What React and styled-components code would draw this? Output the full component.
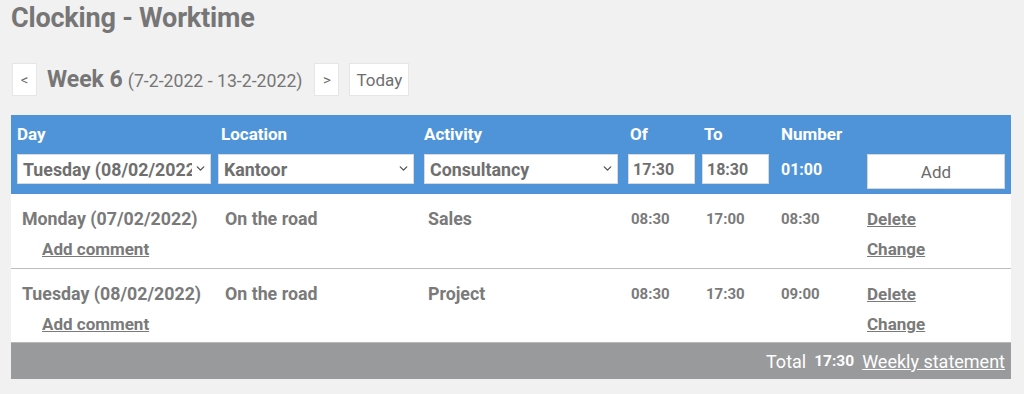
import React from "react";
import styled, { createGlobalStyle } from "styled-components";
import { ChevronDown } from "lucide-react";

const Global = createGlobalStyle`
  html, body { margin: 0; padding: 0; background: #f1f1f1; }
  body { font-family: Roboto, "Liberation Sans", sans-serif; color: #777; }
  * { box-sizing: border-box; }
`;

const Page = styled.div`
  padding: 1px 13px 0 11px;
`;

const Title = styled.h1`
  margin: 0;
  font-size: 27px;
  line-height: 34px;
  font-weight: 700;
  color: #767676;
  letter-spacing: -0.2px;
`;

const Nav = styled.div`
  display: flex;
  align-items: center;
  margin-top: 28px;
  padding-left: 1px;
  height: 33px;
`;

const NavButton = styled.button`
  height: 33px;
  padding: 0 ${(p) => (p.$wide ? 6 : 7)}px;
  min-width: 25px;
  background: #fff;
  border: 1px solid #e6e6e6;
  color: #6e6e6e;
  font-family: inherit;
  font-size: ${(p) => (p.$wide ? "17px" : "15px")};
  font-weight: 400;
  cursor: pointer;
  margin-left: ${(p) => p.$ml || 0}px;
`;

const WeekLabel = styled.div`
  margin-left: 10px;
  font-size: 23px;
  font-weight: 700;
  color: #767676;
  display: flex;
  align-items: baseline;
  gap: 5px;
`;

const Range = styled.span`
  font-size: 17.7px;
  font-weight: 400;
`;

const Table = styled.div`
  margin-top: 19px;
  width: 1000px;
`;

const cols = "204px 203px 204px 74px 79px 86px 1fr";

const Head = styled.div`
  background: #4f94d9;
  display: grid;
  grid-template-columns: ${cols};
  grid-template-rows: 35px 35px;
  row-gap: 4px;
  padding-bottom: 5px;
`;

const HeadLabel = styled.div`
  color: #fff;
  font-weight: 700;
  font-size: 17px;
  display: flex;
  align-items: center;
  padding-left: ${(p) => p.$pl ?? 6}px;
  padding-top: 2px;
`;

const HeadCell = styled.div`
  display: flex;
  align-items: flex-start;
  padding-left: ${(p) => p.$pl ?? 6}px;
  padding-right: ${(p) => p.$pr ?? 4}px;
`;

const SelectWrap = styled.div`
  position: relative;
  width: 100%;
  height: 30px;
`;

const Select = styled.select`
  appearance: none;
  -webkit-appearance: none;
  width: 100%;
  height: 30px;
  border: 1px solid #d9d9d9;
  border-radius: 0;
  background: #fff;
  color: #6f6f6f;
  font-family: inherit;
  font-weight: 700;
  font-size: 17.8px;
  padding: 0 18px 0 5px;
  outline: none;
`;

const Chevron = styled.span`
  position: absolute;
  right: 4px;
  top: 8px;
  pointer-events: none;
  color: #555;
  display: flex;
`;

const TimeInput = styled.input`
  width: 67px;
  height: 30px;
  border: 1px solid #d9d9d9;
  background: #fff;
  color: #6f6f6f;
  font-family: inherit;
  font-weight: 700;
  font-size: 16px;
  padding: 0 4px;
  outline: none;
`;

const Duration = styled.div`
  color: #fff;
  font-weight: 700;
  font-size: 16px;
  height: 30px;
  display: flex;
  align-items: center;
`;

const AddButton = styled.button`
  width: 138px;
  height: 35px;
  background: #fff;
  border: 1px solid #d6d6d6;
  color: #6a6a6a;
  font-family: inherit;
  font-size: 17px;
  font-weight: 400;
  cursor: pointer;
`;

const Row = styled.div`
  display: grid;
  grid-template-columns: ${cols};
  background: #fff;
  padding: 10px 0 ${(p) => (p.$last ? 3 : 4)}px;
  border-bottom: ${(p) => (p.$last ? "none" : "1px solid #bdbdbd")};
`;

const Cell = styled.div`
  padding-left: ${(p) => p.$pl ?? 11}px;
  font-weight: 700;
  font-size: ${(p) => (p.$small ? "15px" : "17.8px")};
  color: #7a7a7a;
  line-height: 30px;
  display: flex;
  flex-direction: column;
  align-items: flex-start;
`;

const Link = styled.a`
  color: #7a7a7a;
  text-decoration: underline;
  font-weight: 700;
  font-size: 17px;
  margin-left: ${(p) => p.$ml || 0}px;
  cursor: pointer;
`;

const Footer = styled.div`
  background: #999a9b;
  border-top: 1px solid #b9b9b9;
  height: 37px;
  display: flex;
  align-items: center;
  justify-content: flex-end;
  padding-right: 6px;
  color: #fff;
  font-size: 18px;
  gap: 8px;
`;

const TotalValue = styled.span`
  font-weight: 700;
  font-size: 15.5px;
`;

const FooterLink = styled.a`
  color: #fff;
  text-decoration: underline;
  font-size: 18px;
`;

function Dropdown({ value, options }) {
  return (
    <SelectWrap>
      <Select defaultValue={value}>
        {options.map((o) => (
          <option key={o}>{o}</option>
        ))}
      </Select>
      <Chevron>
        <ChevronDown size={13} strokeWidth={2.5} />
      </Chevron>
    </SelectWrap>
  );
}

const entries = [
  { day: "Monday (07/02/2022)", loc: "On the road", act: "Sales", of: "08:30", to: "17:00", num: "08:30" },
  { day: "Tuesday (08/02/2022)", loc: "On the road", act: "Project", of: "08:30", to: "17:30", num: "09:00" },
];

export default function App() {
  return (
    <>
      <Global />
      <Page>
        <Title>Clocking - Worktime</Title>
        <Nav>
          <NavButton>&lt;</NavButton>
          <WeekLabel>
            Week 6 <Range>(7-2-2022 - 13-2-2022)</Range>
          </WeekLabel>
          <NavButton $ml={12}>&gt;</NavButton>
          <NavButton $wide $ml={10}>Today</NavButton>
        </Nav>
        <Table>
          <Head>
            <HeadLabel>Day</HeadLabel>
            <HeadLabel>Location</HeadLabel>
            <HeadLabel>Activity</HeadLabel>
            <HeadLabel $pl={8}>Of</HeadLabel>
            <HeadLabel $pl={8}>To</HeadLabel>
            <HeadLabel>Number</HeadLabel>
            <HeadLabel />
            <HeadCell $pr={4}>
              <Dropdown value="Tuesday (08/02/2022)" options={["Monday (07/02/2022)", "Tuesday (08/02/2022)"]} />
            </HeadCell>
            <HeadCell $pl={3} $pr={4}>
              <Dropdown value="Kantoor" options={["Kantoor", "On the road"]} />
            </HeadCell>
            <HeadCell $pl={6} $pr={4}>
              <Dropdown value="Consultancy" options={["Consultancy", "Sales", "Project"]} />
            </HeadCell>
            <HeadCell>
              <TimeInput defaultValue="17:30" />
            </HeadCell>
            <HeadCell>
              <TimeInput defaultValue="18:30" />
            </HeadCell>
            <HeadCell>
              <Duration>01:00</Duration>
            </HeadCell>
            <HeadCell>
              <AddButton>Add</AddButton>
            </HeadCell>
          </Head>
          {entries.map((e, i) => (
            <Row key={e.day} $last={i === entries.length - 1}>
              <Cell>
                <span>{e.day}</span>
                <Link $ml={20}>Add comment</Link>
              </Cell>
              <Cell $pl={10}>{e.loc}</Cell>
              <Cell $pl={10}>{e.act}</Cell>
              <Cell $pl={9} $small>{e.of}</Cell>
              <Cell $pl={10} $small>{e.to}</Cell>
              <Cell $pl={6} $small>{e.num}</Cell>
              <Cell $pl={6}>
                <Link>Delete</Link>
                <Link>Change</Link>
              </Cell>
            </Row>
          ))}
          <Footer>
            Total <TotalValue>17:30</TotalValue>
            <FooterLink>Weekly statement</FooterLink>
          </Footer>
        </Table>
      </Page>
    </>
  );
}
